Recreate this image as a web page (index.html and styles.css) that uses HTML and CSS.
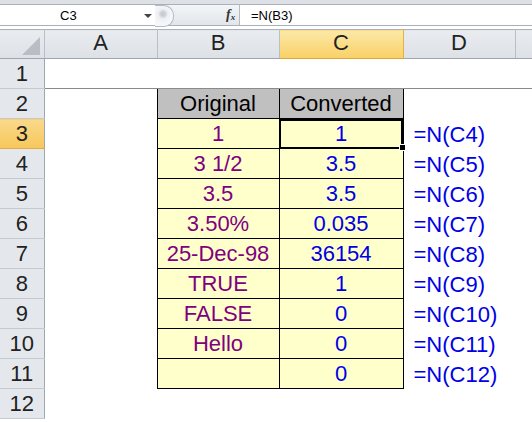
FILE: index.html
```html
<!DOCTYPE html>
<html>
<head>
  <meta charset="UTF-8">
  <title>N function</title>
  <link rel="stylesheet" href="styles.css">
</head>
<body>
  <!-- 수식 입력줄 -->
  <div class="formula-bar">
    <div class="name-box">
      <span class="cell-ref">C3</span>
      <span class="drop-arrow"></span>
    </div>
    <div class="fx-area">
      <span class="grip"></span>
      <span class="fx">f<sub>x</sub></span>
    </div>
    <div class="formula">=N(B3)</div>
  </div>
  <div class="gap"></div>

  <!-- 시트 -->
  <table class="sheet">
    <colgroup>
      <col class="c-row">
      <col class="c-a">
      <col class="c-b">
      <col class="c-c">
      <col class="c-d">
      <col class="c-e">
    </colgroup>
    <tr class="col-heads">
      <th class="corner"><span class="tri"></span></th>
      <th>A</th>
      <th>B</th>
      <th class="sel">C</th>
      <th>D</th>
      <th></th>
    </tr>
    <tr>
      <th class="rh">1</th>
      <td class="line"></td><td class="line"></td><td class="line"></td><td class="line"></td><td class="line"></td>
    </tr>
    <tr>
      <th class="rh">2</th>
      <td></td>
      <td class="hd">Original</td>
      <td class="hd">Converted</td>
      <td></td><td></td>
    </tr>
    <tr>
      <th class="rh sel">3</th>
      <td></td>
      <td class="orig">1</td>
      <td class="conv active">1<span class="handle"></span></td>
      <td class="fm">=N(C4)</td><td></td>
    </tr>
    <tr>
      <th class="rh">4</th>
      <td></td>
      <td class="orig">3 1/2</td>
      <td class="conv">3.5</td>
      <td class="fm">=N(C5)</td><td></td>
    </tr>
    <tr>
      <th class="rh">5</th>
      <td></td>
      <td class="orig">3.5</td>
      <td class="conv">3.5</td>
      <td class="fm">=N(C6)</td><td></td>
    </tr>
    <tr>
      <th class="rh">6</th>
      <td></td>
      <td class="orig">3.50%</td>
      <td class="conv">0.035</td>
      <td class="fm">=N(C7)</td><td></td>
    </tr>
    <tr>
      <th class="rh">7</th>
      <td></td>
      <td class="orig">25-Dec-98</td>
      <td class="conv">36154</td>
      <td class="fm">=N(C8)</td><td></td>
    </tr>
    <tr>
      <th class="rh">8</th>
      <td></td>
      <td class="orig">TRUE</td>
      <td class="conv">1</td>
      <td class="fm">=N(C9)</td><td></td>
    </tr>
    <tr>
      <th class="rh">9</th>
      <td></td>
      <td class="orig">FALSE</td>
      <td class="conv">0</td>
      <td class="fm">=N(C10)</td><td></td>
    </tr>
    <tr>
      <th class="rh">10</th>
      <td></td>
      <td class="orig">Hello</td>
      <td class="conv">0</td>
      <td class="fm">=N(C11)</td><td></td>
    </tr>
    <tr>
      <th class="rh">11</th>
      <td></td>
      <td class="orig"></td>
      <td class="conv">0</td>
      <td class="fm">=N(C12)</td><td></td>
    </tr>
    <tr>
      <th class="rh">12</th>
      <td></td><td></td><td></td><td></td><td></td>
    </tr>
  </table>
</body>
</html>
```

FILE: styles.css
```css
/* 기본 */
body {
  margin: 0;
  width: 532px;
  height: 422px;
  overflow: hidden;
  background: #fff;
  font-family: Arial, "Liberation Sans", sans-serif;
}

/* 수식 입력줄 */
.formula-bar {
  display: flex;
  height: 21px;
  border-top: 4px solid #dde1e6;
  border-bottom: 1px solid #a9b0b9;
  font-size: 13px;
  color: #000;
}

.name-box {
  width: 157px;
  position: relative;
  background: #fff;
  border-top: 1px solid #aab1ba;
}

.cell-ref {
  position: absolute;
  left: 60px;
  top: 3px;
}

.drop-arrow {
  position: absolute;
  left: 144px;
  top: 9px;
  border-left: 4px solid transparent;
  border-right: 4px solid transparent;
  border-top: 4px solid #444;
}

.fx-area {
  width: 82px;
  position: relative;
  background: linear-gradient(#f3f5f7, #e2e6ea);
  border-top: 1px solid #aab1ba;
  border-right: 1px solid #b4bbc4;
}

.grip {
  position: absolute;
  left: -2px;
  top: 0;
  width: 18px;
  height: 20px;
  border-radius: 0 10px 10px 0;
  border: 1px solid #b4bbc4;
  border-left: none;
  background: radial-gradient(circle at 8px 8px, #c9ced4 2px, #eef0f3 5px, #f6f7f9 10px);
}

.fx {
  position: absolute;
  left: 69px;
  top: 2px;
  font-family: "Liberation Serif", "Times New Roman", serif;
  font-style: italic;
  font-weight: bold;
  font-size: 14px;
  color: #333;
}

.fx sub {
  font-size: 9px;
  vertical-align: -1px;
}

.formula {
  flex: 1;
  background: #fff;
  border-top: 1px solid #aab1ba;
  padding: 3px 0 0 11px;
}

.gap {
  height: 3px;
  background: #fff;
}

/* 시트 */
.sheet {
  border-collapse: collapse;
  table-layout: fixed;
  width: 532px;
  font-size: 22px;
}

.c-row { width: 44px; }
.c-a { width: 113px; }
.c-b { width: 122px; }
.c-c { width: 124px; }
.c-d { width: 112px; }
.c-e { width: 17px; }

.sheet tr {
  height: 30px;
}

.sheet tr.col-heads {
  height: 29px;
}

.sheet th,
.sheet td {
  padding: 0 0 1px;
  line-height: 26px;
  vertical-align: bottom;
  white-space: nowrap;
  overflow: hidden;
}

.col-heads th {
  font-weight: normal;
  color: #222;
  background: linear-gradient(#e9ecef, #dde1e6);
  border-top: 1px solid #aab1ba;
  border-bottom: 1px solid #9ea7b1;
  border-right: 1px solid #b8bfc7;
  text-align: center;
  padding-bottom: 2px;
}

.col-heads th.sel {
  background: linear-gradient(#fbe9a8, #f9d066);
  border-right-color: #e0b24a;
  border-bottom-color: #d9a836;
}

.corner {
  position: relative;
}

.tri {
  position: absolute;
  right: 4px;
  bottom: 3px;
  width: 0;
  height: 0;
  border-left: 18px solid transparent;
  border-bottom: 18px solid #b9bec5;
}

.rh {
  font-weight: normal;
  color: #222;
  background: #e4e8ed;
  border-right: 1px solid #9ea7b1;
  border-bottom: 1px solid #c3c9d0;
  text-align: center;
}

.rh.sel {
  background: linear-gradient(#f9d98a, #f7c75a);
  border-bottom-color: #dfae45;
}

.line {
  border-bottom: 1px solid #8a8a8a;
}

/* 표 영역 */
.hd,
.orig,
.conv {
  border: 1px solid #000;
  text-align: center;
}

.hd {
  background: #c0c0c0;
  color: #000;
}

.orig {
  background: #ffffcc;
  color: #800080;
}

.conv {
  background: #ffffcc;
  color: #0000e6;
}

.active {
  position: relative;
  overflow: visible !important;
  outline: 2px solid #000;
  outline-offset: -2px;
}

.handle {
  position: absolute;
  right: -3px;
  bottom: -3px;
  width: 5px;
  height: 5px;
  background: #000;
  border: 1px solid #fff;
}

.fm {
  color: #0000e6;
  padding-left: 10px !important;
}
```
